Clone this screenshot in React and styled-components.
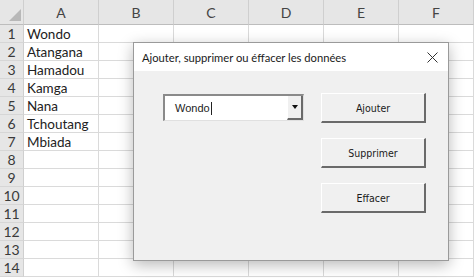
import React from "react";
import styled, { createGlobalStyle } from "styled-components";

const Global = createGlobalStyle`
  html, body { margin: 0; padding: 0; background: #fff; }
  body { width: 474px; height: 278px; overflow: hidden; font-family: Lato, "Noto Sans", sans-serif; }
`;

const Page = styled.div`
  position: relative;
  width: 474px;
  height: 278px;
  overflow: hidden;
`;

const Sheet = styled.div`
  display: grid;
  grid-template-columns: 24px repeat(6, 75px);
  grid-template-rows: 25px repeat(14, 18px);
`;

const Corner = styled.div`
  position: relative;
  background: #e6e6e6;
  border-right: 1px solid #cfcfcf;
  border-bottom: 1px solid #bdbdbd;
  box-sizing: border-box;
  &::after {
    content: "";
    position: absolute;
    right: 2px;
    bottom: 3px;
    width: 0;
    height: 0;
    border-left: 12px solid transparent;
    border-bottom: 12px solid #b8b8b8;
  }
`;

const ColHead = styled.div`
  background: #e6e6e6;
  border-right: 1px solid #cfcfcf;
  border-bottom: 1px solid #bdbdbd;
  box-sizing: border-box;
  display: flex;
  align-items: center;
  justify-content: center;
  font-size: 14px;
  color: #444;
  padding-top: 1px;
`;

const RowHead = styled.div`
  background: #e6e6e6;
  border-right: 1px solid #cfcfcf;
  border-bottom: 1px solid #d6d6d6;
  box-sizing: border-box;
  display: flex;
  align-items: center;
  justify-content: center;
  font-size: 14px;
  color: #3a3a3a;
`;

const Cell = styled.div`
  border-right: 1px solid #dadada;
  border-bottom: 1px solid #dadada;
  box-sizing: border-box;
  display: flex;
  align-items: center;
  padding-left: 3px;
  font-size: 13.5px;
  color: #222;
  white-space: nowrap;
  overflow: visible;
`;

const Dialog = styled.div`
  position: absolute;
  left: 133px;
  top: 42px;
  width: 316px;
  height: 219px;
  box-sizing: border-box;
  border: 1px solid #9a9a9a;
  background: #f0f0f0;
  box-shadow: 0 4px 14px rgba(0, 0, 0, 0.28);
  display: flex;
  flex-direction: column;
`;

const TitleBar = styled.div`
  height: 28px;
  background: #fff;
  display: flex;
  align-items: center;
  justify-content: space-between;
  padding: 0 10px 0 8px;
  flex-shrink: 0;
`;

const Title = styled.span`
  font-family: Lato, "Noto Sans", sans-serif;
  font-size: 11.2px;
  color: #1a1a1a;
`;

const Body = styled.div`
  display: flex;
  align-items: flex-start;
  padding: 23px 0 0 29px;
  gap: 17px;
`;

const Combo = styled.div`
  width: 141px;
  height: 27px;
  box-sizing: border-box;
  display: flex;
  background: #fff;
  border-top: 2px solid #8a8a8a;
  border-left: 2px solid #8a8a8a;
  border-right: 1px solid #e0e0e0;
  border-bottom: 1px solid #e0e0e0;
`;

const ComboText = styled.div`
  flex: 1;
  display: flex;
  align-items: center;
  padding-left: 10px;
  font-family: "Liberation Sans", Arial, sans-serif;
  font-size: 11px;
  color: #222;
`;

const Caret = styled.span`
  display: inline-block;
  width: 1px;
  height: 13px;
  background: #222;
  margin-left: 1px;
`;

const DropBtn = styled.div`
  width: 16px;
  background: #f0f0f0;
  border-left: 1px solid #fff;
  border-right: 2px solid #6a6a6a;
  border-bottom: 2px solid #6a6a6a;
  box-sizing: border-box;
  display: flex;
  align-items: center;
  justify-content: center;
  &::after {
    content: "";
    width: 0;
    height: 0;
    border-left: 3.5px solid transparent;
    border-right: 3.5px solid transparent;
    border-top: 4px solid #111;
  }
`;

const Buttons = styled.div`
  display: flex;
  flex-direction: column;
  gap: 15px;
  margin-top: -1px;
`;

const Btn = styled.div`
  width: 105px;
  height: 30px;
  box-sizing: border-box;
  background: #f0f0f0;
  border-top: 1px solid #fff;
  border-left: 1px solid #fff;
  border-right: 2px solid #6a6a6a;
  border-bottom: 2px solid #6a6a6a;
  display: flex;
  align-items: center;
  justify-content: center;
  font-family: "DejaVu Sans Condensed", "DejaVu Sans", sans-serif;
  font-size: 10.5px;
  color: #1a1a1a;
  padding-top: 1px;
`;

const cols = ["A", "B", "C", "D", "E", "F"];
const names = ["Wondo", "Atangana", "Hamadou", "Kamga", "Nana", "Tchoutang", "Mbiada"];

export default function App() {
  const rows = Array.from({ length: 14 }, (_, i) => i + 1);
  return (
    <Page>
      <Global />
      <Sheet>
        <Corner />
        {cols.map((c) => (
          <ColHead key={c}>{c}</ColHead>
        ))}
        {rows.map((r) => (
          <React.Fragment key={r}>
            <RowHead>{r}</RowHead>
            {cols.map((c) => (
              <Cell key={c}>{c === "A" ? names[r - 1] || "" : ""}</Cell>
            ))}
          </React.Fragment>
        ))}
      </Sheet>
      <Dialog>
        <TitleBar>
          <Title>Ajouter, supprimer ou éffacer les données</Title>
          <svg width="11" height="11" viewBox="0 0 11 11">
            <path d="M0.5 0.5 L10.5 10.5 M10.5 0.5 L0.5 10.5" stroke="#333" strokeWidth="1" />
          </svg>
        </TitleBar>
        <Body>
          <Combo>
            <ComboText>
              Wondo<Caret />
            </ComboText>
            <DropBtn />
          </Combo>
          <Buttons>
            <Btn>Ajouter</Btn>
            <Btn>Supprimer</Btn>
            <Btn>Effacer</Btn>
          </Buttons>
        </Body>
      </Dialog>
    </Page>
  );
}
